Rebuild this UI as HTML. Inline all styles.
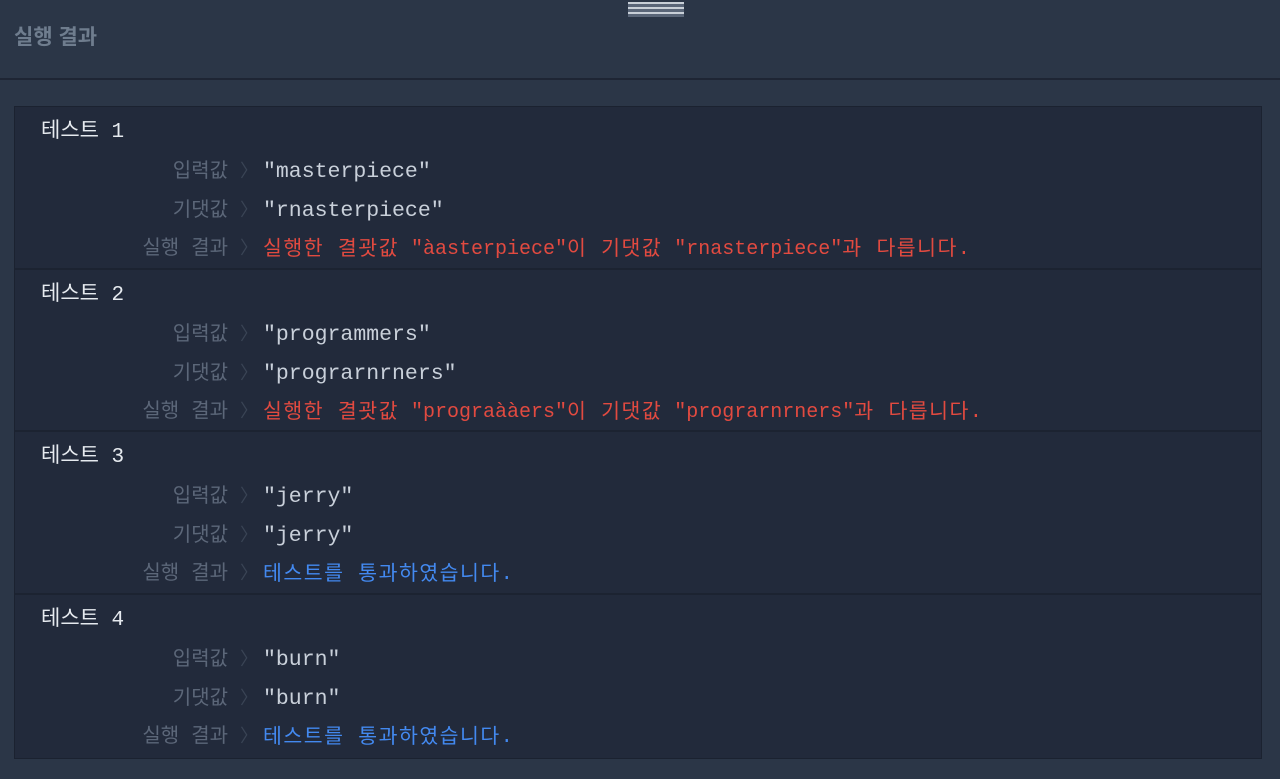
<!DOCTYPE html>
<html><head><meta charset="utf-8"><style>
*{margin:0;padding:0;box-sizing:border-box}
body{width:1280px;height:779px;background:#2b3647;overflow:hidden;position:relative;font-family:"Liberation Mono","Noto Sans CJK KR",monospace}
.hdr{position:absolute;left:0;top:0;width:1280px;height:80px;border-bottom:2px solid #1e2534;background:#2b3647}
.grip{position:absolute;left:628px;top:2px;width:56px;height:15px;background:repeating-linear-gradient(#c9d0d8 0 2px,#5a6678 2px 5px)}
.ttl{position:absolute;left:14px;top:21px;font-family:"Liberation Sans","Noto Sans CJK KR",sans-serif;font-weight:bold;font-size:21px;color:#6f7d8e}
.panel{position:absolute;left:14px;top:106px;width:1248px;height:653px;background:#222a3b;border:1px solid #1b2230}
.blk{height:162.5px;border-bottom:2px solid #1c2331;position:relative}
.blk:last-child{border-bottom:none}
.t{position:absolute;left:26px;top:12px;font-size:21px;color:#e6eaef;line-height:28px}
.r{position:absolute;left:0;width:1200px;height:30px;line-height:30px;font-size:21.5px;white-space:pre}
.l{position:absolute;left:13px;width:200px;text-align:right;color:#5c6779;font-size:20px;top:1px}
.c{position:absolute;left:225px;color:#3a4455;font-family:"DejaVu Sans",sans-serif;font-size:18px}
.v{position:absolute;left:248px;color:#c9d0da}
.k{letter-spacing:1.5px;font-size:20.5px;position:relative;top:1px}
.red,.blue{font-size:20px;top:1px}
.red{color:#e24a40}.blue{color:#4389f0}
</style></head><body>
<div class="hdr"><div class="grip"></div><div class="ttl">실행 결과</div></div>
<div class="panel">
<div class="blk"><div class="t">테스트 1</div>
<div class="r" style="top:50px"><span class="l">입력값</span><span class="c">〉</span><span class="v">"masterpiece"</span></div>
<div class="r" style="top:89px"><span class="l">기댓값</span><span class="c">〉</span><span class="v">"rnasterpiece"</span></div>
<div class="r" style="top:127px"><span class="l">실행 결과</span><span class="c">〉</span><span class="v red"><span class="k">실행한 결괏값</span> "àasterpiece"<span class="k">이 기댓값</span> "rnasterpiece"<span class="k">과 다릅니다</span>.</span></div></div>
<div class="blk"><div class="t">테스트 2</div>
<div class="r" style="top:50px"><span class="l">입력값</span><span class="c">〉</span><span class="v">"programmers"</span></div>
<div class="r" style="top:89px"><span class="l">기댓값</span><span class="c">〉</span><span class="v">"prograrnrners"</span></div>
<div class="r" style="top:127px"><span class="l">실행 결과</span><span class="c">〉</span><span class="v red"><span class="k">실행한 결괏값</span> "prograààers"<span class="k">이 기댓값</span> "prograrnrners"<span class="k">과 다릅니다</span>.</span></div></div>
<div class="blk"><div class="t">테스트 3</div>
<div class="r" style="top:50px"><span class="l">입력값</span><span class="c">〉</span><span class="v">"jerry"</span></div>
<div class="r" style="top:89px"><span class="l">기댓값</span><span class="c">〉</span><span class="v">"jerry"</span></div>
<div class="r" style="top:127px"><span class="l">실행 결과</span><span class="c">〉</span><span class="v blue"><span class="k">테스트를 통과하였습니다</span>.</span></div></div>
<div class="blk"><div class="t">테스트 4</div>
<div class="r" style="top:50px"><span class="l">입력값</span><span class="c">〉</span><span class="v">"burn"</span></div>
<div class="r" style="top:89px"><span class="l">기댓값</span><span class="c">〉</span><span class="v">"burn"</span></div>
<div class="r" style="top:127px"><span class="l">실행 결과</span><span class="c">〉</span><span class="v blue"><span class="k">테스트를 통과하였습니다</span>.</span></div></div>
</div>
</body></html>
